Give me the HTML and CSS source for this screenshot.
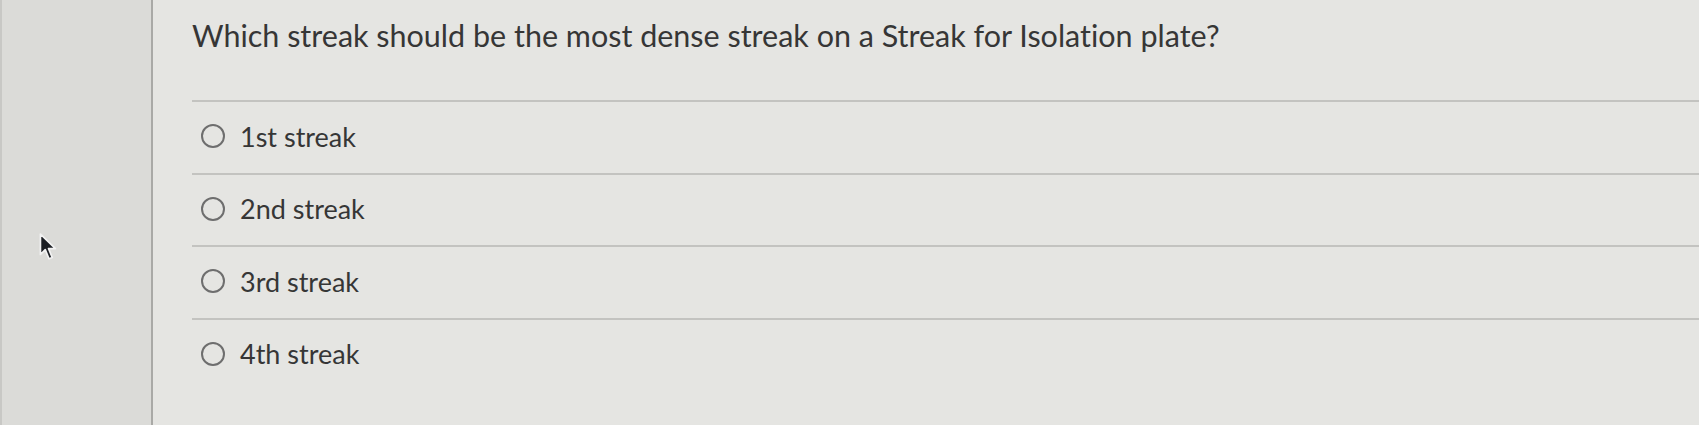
FILE: index.html
```html
<!DOCTYPE html>
<html>
<head>
<meta charset="utf-8">
<link rel="stylesheet" href="styles.css">
</head>
<body>
<div class="page">
  <aside class="sidebar"></aside>
  <main class="main">
    <h1 class="question">Which streak should be the most dense streak on a Streak for Isolation plate?</h1>
    <ul class="options">
      <li class="option"><span class="radio"></span><span class="label">1st streak</span></li>
      <li class="option"><span class="radio"></span><span class="label">2nd streak</span></li>
      <li class="option"><span class="radio"></span><span class="label">3rd streak</span></li>
      <li class="option"><span class="radio"></span><span class="label">4th streak</span></li>
    </ul>
  </main>
</div>
<svg class="cursor" width="22" height="30" viewBox="0 0 20 28">
  <path d="M2 2 L2 21 L6.5 16.5 L10 25 L13 23.8 L9.6 15.5 L16 15.5 Z" fill="#1c1f24" stroke="#f2f2f2" stroke-width="1.6" stroke-linejoin="round"/>
</svg>
</body>
</html>
```
FILE: styles.css
```css
html, body {
  margin: 0;
  padding: 0;
  width: 1699px;
  height: 425px;
  overflow: hidden;
  background: #e4e4e1;
  font-family: Lato, "Liberation Sans", sans-serif;
  font-variant-ligatures: none;
}
.page {
  display: flex;
  height: 425px;
}
.sidebar {
  flex: none;
  width: 153px;
  background: #dbdbd8;
  border-right: 2px solid #a9a9a6;
  border-left: 2px solid #c8c8c5;
  box-sizing: border-box;
}
.main {
  flex: 1;
  padding-left: 39px;
  background: #e5e5e2;
}
.question {
  margin: 0;
  padding-top: 17px;
  height: 100px;
  box-sizing: border-box;
  font-size: 30.5px;
  font-weight: 400;
  color: #363636;
  line-height: 36px;
  white-space: nowrap;
}
.options {
  list-style: none;
  margin: 0;
  padding: 0;
}
.option {
  display: flex;
  align-items: center;
  height: 72.5px;
  border-top: 2px solid #c3c3c0;
  box-sizing: border-box;
  padding-left: 9px;
  padding-bottom: 2px;
}
.radio {
  width: 24px;
  height: 24px;
  border: 2px solid #6e6e6e;
  border-radius: 50%;
  box-sizing: border-box;
  flex: none;
}
.label {
  margin-left: 15px;
  font-size: 27px;
  color: #363636;
}
.cursor {
  position: absolute;
  left: 38px;
  top: 232px;
}
```
